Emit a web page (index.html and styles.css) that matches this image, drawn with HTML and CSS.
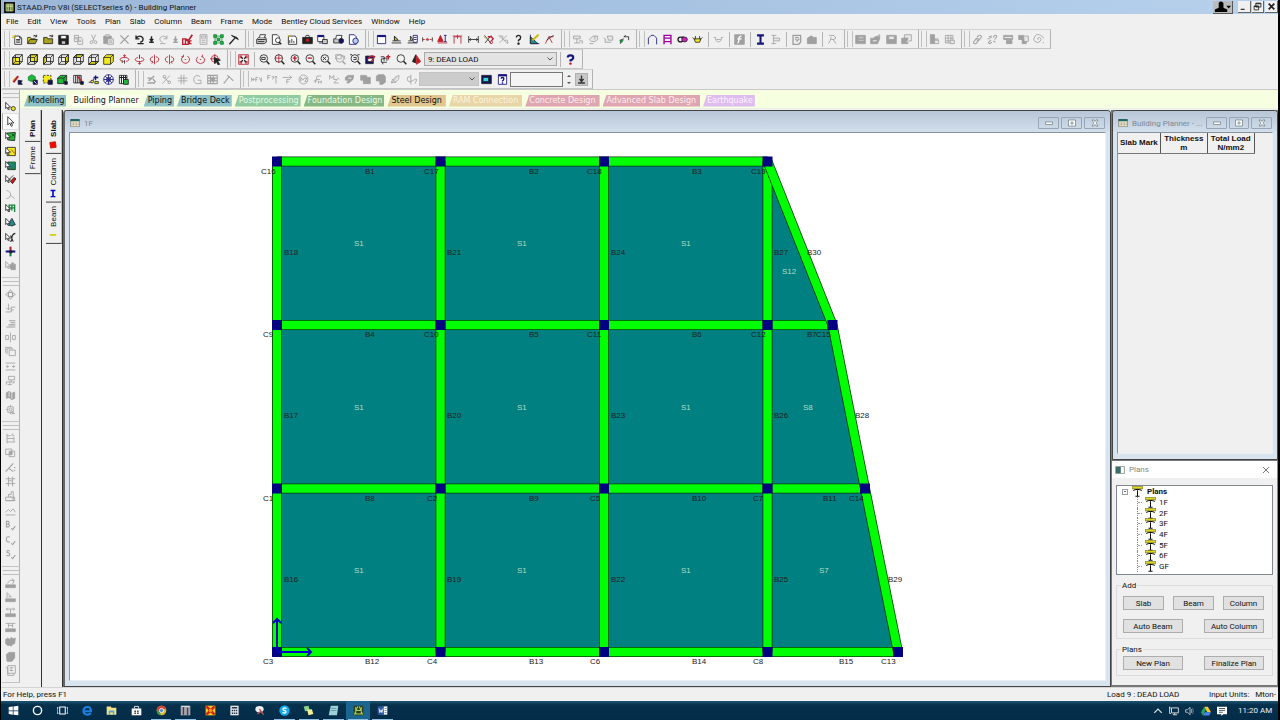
FILE: index.html
```html
<!DOCTYPE html>
<html lang="en">
<head>
    <meta charset="UTF-8">
    <meta name="viewport" content="width=device-width, initial-scale=1.0">
    <title>STAAD.Pro V8i (SELECTseries 6) - Building Planner</title>
    <link rel="stylesheet" href="styles.css">
</head>
<body>
    <header class="titlebar">
        <span class="app-icon" data-icons="staad"></span>
        <h1>STAAD.Pro V8i (SELECTseries 6) - Building Planner</h1>
        <button class="user" aria-label="User">
            <svg viewBox="0 0 20 12"><path d="M2 12V9l4-2V2q2-3 5 0v5l4 2v3z" fill="#000"/><path d="M14 5h5l-2.500 3z" fill="#000"/></svg>
        </button>
        <div class="win-buttons" data-icons="w-min w-restore w-close"></div>
    </header>

    <nav class="menu">
        <button>File</button>
        <button>Edit</button>
        <button>View</button>
        <button>Tools</button>
        <button>Plan</button>
        <button>Slab</button>
        <button>Column</button>
        <button>Beam</button>
        <button>Frame</button>
        <button>Mode</button>
        <button>Bentley Cloud Services</button>
        <button>Window</button>
        <button>Help</button>
    </nav>

    <section class="toolbars">
        <div class="row">
            <div class="bar" id="file-bar" data-icons="new open close save ~copy ~cut ~paste ~delete undo down ~redo ~down check ~calc structure hammer"></div>
            <div class="bar" id="print-bar" data-icons="print preview report camera export print-all page-info"></div>
            <div class="bar" id="tools-bar" data-icons="win load load-list dim-red load-red frame-red dimension cut-red ~cut-grid help chart angle-red"></div>
            <div class="bar" id="view-bar" data-icons="~beam-t ~select-box ~select-win rotate-view"></div>
            <div class="bar" id="model-bar" data-icons="portal ladder ring plug | ~sag | ~function | ibeam ~beam-edit | ~sheet ~shape | ~run"></div>
            <div class="bar" id="layout-bar" data-icons="~disk ~disk-open ~disk2 ~disk-copy"></div>
            <div class="bar" id="page-bar" data-icons="~doc-lock ~grid-lock"></div>
            <div class="bar" id="link-bar" data-icons="~link ~unlink ~blocks ~blocks2 ~spiral"></div>
        </div>
        <div class="row">
            <div class="bar" id="rotate-bar" data-icons="cube-front cube-back cube-right cube-left cube-top cube-bottom cube-iso rot-up rot-down rot-left rot-right rot-ccw rot-cw rot-pick"></div>
            <div class="bar" id="zoom-bar">
                <span class="set" data-icons="whole | zoom-win zoom-all zoom-in zoom-out zoom-factor ~zoom-prev zoom-dyn previous pan magnify half"></span>
                <select aria-label="Load case"><option>9: DEAD LOAD</option></select>
                <span class="set" data-icons="| help-blue"></span>
            </div>
        </div>
        <div class="row">
            <div class="bar" id="geometry-bar" data-icons="add-beam add-plate add-surface add-solid mesh add-node globe grid-green"></div>
            <div class="bar" id="insert-bar" data-icons="~pencil ~scissor-line ~split ~circle-g ~grid ~peak"></div>
            <div class="bar" id="result-bar">
                <span class="set" data-icons="~fx ~fy ~arrow-fz ~circle-m ~fmy ~mz ~shade ~solid ~solid2 ~leaf ~curve"></span>
                <select class="small" aria-label="Mode" disabled><option></option></select>
                <span class="set" data-icons="screen help-page"></span>
                <input type="text" aria-label="Value">
                <span class="spinner">
                    <button aria-label="Up"><svg viewBox="0 0 6 4"><path d="M1 3l2-2 2 2z"/></svg></button>
                    <button aria-label="Down"><svg viewBox="0 0 6 4"><path d="M1 1l2 2 2-2z"/></svg></button>
                </span>
                <button class="apply" aria-label="Apply"><svg viewBox="0 0 16 16"><path d="M3 13h10M8 2v8M5 7l3 4 3-4" stroke="#333" stroke-width="2" fill="none"/></svg></button>
            </div>
        </div>
    </section>

    <main>
        <aside class="side-tools">
            <div class="bar vertical" id="select-bar" data-icons="pick-node pick-beam pick-plate pick-surface pick-solid pick-geom ~pick-text pick-support pick-load pick-curve axes ~pick-hand"></div>
            <div class="bar vertical" id="edit-bar" data-icons="~move ~drop ~align ~mirror ~copies ~spread ~tree-edit ~map ~gear-box"></div>
            <div class="bar vertical" id="draw-bar" data-icons="~levels ~overlap ~angle-x ~hash ~steps ~wave ~b-mark ~c-mark ~s-mark"></div>
            <div class="bar vertical" id="support-bar" data-icons="~sup-pick ~sup-cursor ~sup-fix ~sup-pin ~blob ~blob2 ~frame-box"></div>
        </aside>

        <div class="workspace">
            <nav class="modes">
                <button class="blue">Modeling</button>
                <button class="current">Building Planner</button>
                <button class="blue">Piping</button>
                <button class="blue">Bridge Deck</button>
                <button class="mint">Postprocessing</button>
                <button class="green">Foundation Design</button>
                <button class="tan">Steel Design</button>
                <button class="sand">RAM Connection</button>
                <button class="rose">Concrete Design</button>
                <button class="rose">Advanced Slab Design</button>
                <button class="lilac">Earthquake</button>
            </nav>

            <div class="desktop">
                <nav class="side-tabs views">
                    <button class="current">Plan</button>
                    <button>Frame</button>
                </nav>
                <nav class="side-tabs elements">
                    <button class="current"><svg viewBox="0 0 10 10"><path d="M1 2l7-1 1 7-7 1z" fill="#f00" stroke="#a20"/></svg>Slab</button>
                    <button><svg viewBox="0 0 10 10"><path d="M2 1h6M2 9h6M5 1v8" stroke="#00c" stroke-width="2"/></svg>Column</button>
                    <button><svg viewBox="0 0 10 10"><path d="M1 5h8" stroke="#cc0" stroke-width="2"/></svg>Beam</button>
                </nav>

                <section class="window plan-window">
                    <div class="caption">
                        <svg class="table-icon" viewBox="0 0 16 14"><path d="M.5.5h15v13H.5z" fill="#fff8d8" stroke="#555"/><path d="M0 0h16v4H0z" fill="#266"/><path d="M1 7h14M1 10h14M5 4v9M10 4v9" stroke="#998"/></svg>
                        <h2>1F</h2>
                        <div class="caption-buttons" data-icons="c-min c-max c-close"></div>
                    </div>
                    <div class="client">
                        <svg class="plan" viewBox="70 133 1035 547" role="img" aria-label="Floor plan 1F">
                            <path class="slab" d="M277 161h490l65 164 33 163 33 164H277z"/>
                            <g id="beams"></g>
                            <g id="nodes"></g>
                            <g id="labels"></g>
                            <path class="axis" d="M277 652v-32M273 623l4-4 4 4M277 652h33M307 648l4 4-4 4"/>
                        </svg>
                    </div>
                </section>

                <div class="right">
                    <section class="window table-window">
                        <div class="caption">
                            <svg class="table-icon" viewBox="0 0 16 14"><path d="M.5.5h15v13H.5z" fill="#fff8d8" stroke="#555"/><path d="M0 0h16v4H0z" fill="#266"/><path d="M1 7h14M1 10h14M5 4v9M10 4v9" stroke="#998"/></svg>
                            <h2>Building Planner - ...</h2>
                            <div class="caption-buttons" data-icons="c-min c-max c-close"></div>
                        </div>
                        <div class="client">
                            <table>
                                <tr><th>Slab Mark</th><th>Thickness<br>m</th><th>Total Load<br>N/mm2</th></tr>
                            </table>
                        </div>
                    </section>

                    <section class="plans">
                        <div class="plans-caption">
                            <svg viewBox="0 0 12 10"><path d="M.5.5h11v9H.5z" fill="#fff" stroke="#888"/><path d="M1 1h6v8H1z" fill="#396e6a"/></svg>
                            <h2>Plans</h2>
                            <button aria-label="Close"><svg viewBox="0 0 8 8"><path d="M1 1l6 6M7 1L1 7" stroke="#777"/></svg></button>
                        </div>
                        <div class="tree">
                            <div class="root"><span class="toggle"></span><span data-icons="floor"></span><b>Plans</b></div>
                            <ul>
                                <li><span data-icons="floor"></span>1F</li>
                                <li><span data-icons="floor"></span>2F</li>
                                <li><span data-icons="floor"></span>3F</li>
                                <li><span data-icons="floor"></span>4F</li>
                                <li><span data-icons="floor"></span>5F</li>
                                <li><span data-icons="floor"></span>6F</li>
                                <li><span data-icons="floor"></span>GF</li>
                            </ul>
                        </div>
                        <fieldset class="add">
                            <legend>Add</legend>
                            <div><button>Slab</button><button>Beam</button><button>Column</button></div>
                            <div class="pair"><button>Auto Beam</button><button>Auto Column</button></div>
                        </fieldset>
                        <fieldset>
                            <legend>Plans</legend>
                            <div class="pair"><button>New Plan</button><button>Finalize Plan</button></div>
                        </fieldset>
                    </section>
                </div>
            </div>
        </div>
    </main>

    <footer class="status">
        <span class="hint">For Help, press F1</span>
        <span class="load-case">Load 9 : DEAD LOAD</span>
        <span class="units">Input Units:&nbsp;&nbsp; Mton-</span>
    </footer>

    <div class="taskbar">
        <div class="apps" data-icons="t-start t-cortana t-tasks t-edge t-folder t-store t-chrome t-photo t-red t-calc t-snip t-skype t-notes t-notepad t-staad t-word"></div>
        <div class="tray" data-icons="t-up t-net t-sound t-drive t-msg"></div>
        <time>11:20 AM</time>
    </div>

    <script>
        const cube = (face) => `${face}<path d="M1 5h10v10H1zM1 5l4-4h10v10l-4 4M11 5l4-4M5 1v10h10M5 11l-4 4"/>`;
        const lens = (inner) => `<circle cx="7" cy="6.500" r="5.500"/><path d="M11 10.500L15 15" stroke-width="2"/>${inner}`;
        const cursor = '<path d="M1 2v9l2-2 2 4 1-1-1-3h3z" class="fw"/>';
        const support = '<path d="M1 10h14v4H1z" class="fc"/>';

        const icons = {
            'new': '<path d="M4 3h7l3 3v9H4z" class="fw"/><path d="M6 8h6M6 10h6M6 12h6M11 3v3h3"/><path d="M1 2l4 4M5 1L2 5M0 5h5" class="sy"/>',
            'open': '<path d="M1 14V5h4l1 2h6v2" class="fy"/><path d="M1 14l3-6h11l-3 6z" class="fo"/><path d="M9 3q3-3 5 1M14 1v3h-3"/>',
            'close': '<path d="M1 14V5h5l1 2h7v7z" class="fo"/><path d="M9 3q3-3 5 1M14 1v3h-3"/>',
            'save': '<path d="M1 2h14v13H1z" class="fc"/><path d="M4 2h8v5H4z" class="fw"/><path d="M5 10h6v5H5z" class="fn"/>',
            'copy': '<path d="M2 2h6v9H2zM7 5h5l2 3v7H7zM3 5h3M3 7h3M9 9h3M9 11h3"/>',
            'cut': '<path d="M5 1l4 9M11 1L7 10"/><circle cx="5" cy="12" r="2"/><circle cx="11" cy="12" r="2"/>',
            'paste': '<path d="M1 3h11v11H1z" class="fc"/><path d="M4 1h5v3H4zM7 7h8v8H7z" class="fw"/><path d="M9 10h4M9 12h4"/>',
            'delete': '<path d="M2 2l12 12M14 2L2 14" stroke-width="2"/>',
            'undo': '<path d="M3 2v5h5M3 6q6-6 10 0 1 5-4 6M5 14h9" stroke-width="2"/>',
            'redo': '<path d="M13 2v5H8M13 6q-6-6-10 0-1 5 4 6M3 14h8"/>',
            'down': '<path d="M8 2v8M5 7l3 4 3-4M4 13h8" stroke-width="2.500"/>',
            'check': '<path d="M1 7h4v8H1zM6 9h3v6H6M14 10h-3v4h3" class="sr" stroke-width="2"/><path d="M6 7l3 3 6-9" class="sr" stroke-width="2.500"/>',
            'calc': '<path d="M3 1h10v14H3zM5 3h6v3H5zM5 9h6M5 12h6"/>',
            'structure': '<path d="M3 3l10 10M13 3L3 13M3 3h10v10H3z" class="sg"/><path d="M1 1h4v4H1zM11 1h4v4h-4zM1 11h4v4H1zM11 11h4v4h-4zM6 6h4v4H6z" class="fg sg"/>',
            'hammer': '<path d="M5 2l8 3 2 3-4-2z" class="fc"/><path d="M10 6L2 15" stroke-width="2"/>',
            'print': '<path d="M1 8l3-3h10l1 3v4l-3 2H1z" class="fn"/><path d="M5 5l1-4h8l-2 4M3 11h9M2 8h12" class="fw"/>',
            'preview': '<path d="M2 1h7l3 3v11H2z" class="fw"/><circle cx="10" cy="9" r="3.500" class="fw"/><path d="M12 12l3 3" stroke-width="2"/>',
            'report': '<path d="M2 3h10l2 3v9H2z" class="fw"/><path d="M4 13V9M7 13V7M10 13v-3"/><path d="M1 1l3 3M5 1L2 4" class="sy"/>',
            'camera': '<path d="M1 5h14v9H1z" class="fc"/><path d="M5 5l1-3h4l1 3"/><circle cx="8" cy="9" r="3" class="fr"/>',
            'export': '<path d="M1 2h9v9H1z" class="fw"/><path d="M1 3h9" class="sb" stroke-width="3"/><path d="M8 8h7v6H8z" class="fn"/><path d="M3 13h4" class="sb"/>',
            'print-all': '<path d="M1 7h12v6H1z" class="fn"/><path d="M4 7l1-5h8l-1 5" class="fw"/><circle cx="12" cy="10" r="3.500" class="fb"/>',
            'page-info': '<path d="M2 1h7l3 3v11H2z" class="fw sb"/><circle cx="11" cy="10" r="4" class="fl sb"/>',
            'win': '<path d="M2 2h12v12H2z" class="fw sb"/><path d="M2 3h12" class="sb" stroke-width="3"/>',
            'load': '<path d="M1 13h14M2 10h12M5 10V3l5 5"/><path d="M5 4v5h5z" class="fy"/>',
            'load-list': '<path d="M1 13h14M2 10h5" /><path d="M5 3v6h4z" class="fy"/><path d="M9 2h6v10H9z" class="fw sb"/><path d="M10 5h4M10 8h4" class="sb"/>',
            'dim-red': '<path d="M1 5v6M15 5v6"/><path d="M1 8h14" class="sr" stroke-dasharray="3 2"/><circle cx="8" cy="8" r="1.500" class="sr"/>',
            'load-red': '<path d="M5 2l4 9H1zM1 13h14" class="fr sr"/><path d="M12 2v9M10 2h4M10 11h4" class="sb"/>',
            'frame-red': '<path d="M3 14V4h10v10M1 3h14M8 1v6" class="sr"/>',
            'dimension': '<path d="M1 3v10M15 3v10M1 8h14M4 6L2 8l2 2M12 6l2 2-2 2"/>',
            'cut-red': '<path d="M2 2l10 12M12 2L3 13"/><path d="M7 4h5l3 3-3 3" class="sr" stroke-width="2"/><circle cx="12" cy="12" r="2" class="sr"/><path d="M1 4l4 3" class="sy"/>',
            'cut-grid': '<path d="M1 2l13 12M13 2L2 13M2 3h5v5M9 9h5v5"/>',
            'help': '<path d="M5 5q0-3 3-3t3 3-3 4v2" stroke-width="2"/><path d="M7 13h2v2H7z" class="fc"/>',
            'chart': '<path d="M2 1v13h13" class="sb"/><path d="M2 14V4l11 10z" class="ft"/><path d="M5 9l9-8" class="sy" stroke-width="3"/>',
            'angle-red': '<path d="M2 14L7 4l5 9M7 4h7" class="sr"/><path d="M4 9l5-4 5-3"/>',
            'beam-t': '<path d="M2 3h10v4H2zM7 7v6M3 13h9M10 10h5v4" class="fn"/>',
            'select-box': '<path d="M2 8l5-5h7v5l-4 3H5zM2 14h6M10 3v5" class="fn"/>',
            'select-win': '<path d="M6 3h8v6H8zM3 7v5h9M1 5l3 3" class="fn"/>',
            'rotate-view': '<path d="M7 4h7v5M7 4l3-2M2 14V9l5-2" /><path d="M1 9l4 1-3 3" class="sg" stroke-width="2"/>',
            'portal': '<path d="M2 15V6l4-4h4l4 4v9" class="sb"/>',
            'ladder': '<path d="M3 1v14M13 1v14M3 2h10M3 6h10M3 11h10" class="sm" stroke-width="2"/>',
            'ring': '<circle cx="5" cy="8" r="3.500" stroke-width="2"/><ellipse cx="11" cy="8" rx="4" ry="3.500" class="fm"/><path d="M7 4h3"/>',
            'plug': '<path d="M3 7h10l-2 5H5z" class="fy"/><path d="M5 7V3M11 7V3M1 5l3 3M15 5l-3 3"/>',
            'sag': '<path d="M1 5h3v4q4 5 8 0V5h3M5 8h6"/>',
            'function': '<path d="M1 1h14v14H1z" class="fc"/><path d="M5 13q2 0 2-5t4-5M5 7h6" stroke="#fff" stroke-width="2"/>',
            'ibeam': '<path d="M3 2h10M3 14h10M8 2v12" class="sb" stroke-width="3"/>',
            'beam-edit': '<path d="M2 2h7M2 14h7M5 2v12M5 6h9v4H6" class="fn"/>',
            'sheet': '<path d="M3 2h11v10l-3 3H3zM6 5h5M6 8h2M8 11l4-4" stroke-width="2"/>',
            'shape': '<path d="M2 6l5-3h2l1 2h5v9H2z" class="fc"/>',
            'run': '<path d="M3 2h7l3 4-4 2 4 6M6 4L5 9l-3 5M6 8h4"/>',
            'disk': '<path d="M1 2h14v12H1z" class="fc"/><path d="M5 4h8v2H5zM5 8h8v2H5z" class="fw"/>',
            'disk-open': '<path d="M1 14V6h5l1-2h7v3L11 14z" class="fc"/><path d="M9 4l5-3v4"/><path d="M4 10h6" stroke="#fff"/>',
            'disk2': '<path d="M1 2h14v12H1z" class="fc"/><path d="M4 3h8v5H4z" class="fw"/>',
            'disk-copy': '<path d="M5 1h10v9H5z" class="fn"/><path d="M1 6h9v8H1z" class="fc"/><path d="M8 12l6-6" stroke="#fff"/>',
            'doc-lock': '<path d="M2 1h6v13H2z" class="fc"/><path d="M8 9h6v5H8zM9 9V7h4v2" class="fn"/>',
            'grid-lock': '<path d="M2 2h11v11H2zM2 6h11M2 10h11M6 2v11M10 2v11"/><path d="M9 9h6v5H9z" class="fn"/>',
            'link': '<path d="M7 5l3-3q3-1 4 2l-4 5q-3 1-3-1M9 10l-3 4q-3 1-4-2l4-5q3-1 4 1" stroke-width="1.500"/>',
            'unlink': '<path d="M9 5l2-3q3-1 3 2l-3 4M6 9l-3 2q-2 2 1 3l3-2M3 3l3 3M1 7h3M12 12l-3-2M6 2v3" stroke-width="1.500"/>',
            'blocks': '<path d="M1 2h7v6H1zM9 2h5v6H9zM5 9h8v5H5z" class="fc"/><path d="M2 5h11" stroke="#fff"/>',
            'blocks2': '<path d="M1 2h7v6H1zM6 6h6v8H6z" class="fc"/><path d="M8 3h7v8H9z" class="fw"/>',
            'spiral': '<path d="M8 8q-2 0-1-2 2-2 4 0t-1 5-7 0 0-8 11 1 0 9"/>',
            'cube-front': cube('<path d="M1 5h10v10H1z" class="fy"/>'),
            'cube-back': cube('<path d="M5 1h10v10H5z" class="fy"/>'),
            'cube-right': cube('<path d="M1 5l4-4v10l-4 4z" class="fy"/>'),
            'cube-left': cube('<path d="M11 5l4-4v10l-4 4z" class="fy"/>'),
            'cube-top': cube('<path d="M1 5l4-4h10l-4 4z" class="fy"/>'),
            'cube-bottom': cube('<path d="M1 15l4-4h10l-4 4z" class="fy"/>'),
            'cube-iso': '<path d="M1 5l4-4h10v10l-4 4H1z" class="fy"/><path d="M1 5h10v10M11 5l4-4"/>',
            'rot-up': '<path d="M6 11Q-1 9 3 6q5-3 10 0 4 3-3 5M8 1v5M6 3l2-2 2 2" class="sr"/><path d="M8 9v5M6 11l-2-2M6 11l-2 2"/>',
            'rot-down': '<path d="M6 5Q-1 7 3 10q5 3 10 0 4-3-3-5M8 10v5M6 13l2 2 2-2" class="sr"/><path d="M8 1v6"/>',
            'rot-left': '<path d="M8 1v14M6 4Q1 5 2 9q1 3 4 3M10 4q5 1 4 5-1 3-4 3M4 10l2 2-2 2" class="sr"/>',
            'rot-right': '<path d="M8 1v14M10 4q5 1 4 5-1 3-4 3M6 4Q1 5 2 9q1 3 4 3M12 10l-2 2 2 2" class="sr"/>',
            'rot-ccw': '<path d="M5 3q-5 4-2 8 5 5 10 0 3-4-2-8M5 1v3H2" class="sr"/><path d="M7 8h2" class="sr"/>',
            'rot-cw': '<path d="M4 4q-4 4-1 8 5 4 10 0 3-5-2-8H9M11 1v3" class="sr"/><path d="M7 8h2" class="sr"/>',
            'rot-pick': '<circle cx="7" cy="7" r="5" class="sr"/><path d="M7 0v14M0 7h14" class="sr"/><path d="M6 5l9 4-4 1 3 5-2 1-3-5-2 3z" class="fc"/>',
            'whole': '<path d="M1 1h14v14H1z" class="sr"/><path d="M4 4l3 3M12 4L9 7M4 12l3-3M12 12L9 9" stroke-width="2"/><path d="M3 6V3h3M10 3h3v3M13 10v3h-3M6 13H3v-3" class="sr" stroke-width="1.500"/>',
            'zoom-win': lens('<path d="M4 5h5v3H4z"/>'),
            'zoom-all': lens('<path d="M7 0v13M1 6h12" class="sr"/>'),
            'zoom-in': lens('<path d="M4 6h6M7 3v7" class="sr" stroke-width="2"/>'),
            'zoom-out': lens('<path d="M4 6h6" class="sr" stroke-width="2"/>'),
            'zoom-factor': lens('<path d="M4 4l5 5M9 4L4 9"/>'),
            'zoom-prev': lens('<path d="M1 1h8v6H1zM10 3h4v5"/>'),
            'zoom-dyn': lens('<path d="M5 5h4v3H5M0 1h3M11 1h3"/>'),
            'previous': '<path d="M1 3h11v11H1z" class="fb"/><path d="M4 6h8v5H4z" class="fw"/><path d="M4 7q5-6 10-3l-5 7" class="sr" stroke-width="2"/>',
            'pan': '<path d="M1 4h5v3H2v5h8M4 12v3M6 10V6h4v4"/><path d="M12 1v7M9 4h6" class="sr" stroke-width="2"/>',
            'magnify': lens(''),
            'half': '<path d="M7 1v12l-5-2z" class="fc"/><path d="M8 2l6 9-6 4z" class="fr sr"/>',
            'help-blue': '<path d="M4 5q0-3 4-3t4 3-4 4v2" class="sb" stroke-width="3"/><path d="M7 13h2v2H7z" class="fr sr"/>',
            'add-beam': '<path d="M2 12L9 3" class="sr" stroke-width="3"/><path d="M1 10l4-5" class="sy"/><path d="M9 9l6 1-2 2 2 3H9z" class="fb"/>',
            'add-plate': '<path d="M2 4l5-3 5 3v6l-5 1-5-2z" class="fg sg"/><path d="M9 9h6v6H9z" class="fb"/><path d="M10 10l4 4" stroke="#fff"/>',
            'add-surface': '<path d="M2 2h11v11H2z" class="fy" stroke-dasharray="3 2"/><path d="M9 9h6v6H9z" class="fb"/>',
            'add-solid': '<path d="M1 6l4-4h9v7l-4 5H1z" class="fg"/><path d="M1 6h9v8M10 6l4-4"/><path d="M11 11h4v4h-4z" class="fb"/>',
            'mesh': '<path d="M1 2h11v11H1z" class="fw"/><path d="M4 2v11M7 2v11M10 2v11" stroke-width="1.500"/><path d="M6 3l7 8" class="sr" stroke-width="2"/><path d="M11 11h4v4h-4z" class="fb"/>',
            'add-node': '<path d="M1 12h5l3-6" class="sb"/><circle cx="6" cy="11" r="2" class="fy"/><path d="M11 2v7M8 5h7" class="sb" stroke-width="2"/><path d="M10 11h5v3h-5z" class="fy"/>',
            'globe': '<circle cx="8" cy="8" r="7" class="sb"/><circle cx="8" cy="8" r="3" class="sb"/><path d="M8 1v14M1 8h14M3 3l10 10M13 3L3 13" class="sb"/>',
            'grid-green': '<path d="M2 2h11v12H2z" class="fw"/><path d="M2 5h11M5 2v12M8 2v12M11 2v12" stroke-width="1.500"/><path d="M8 8h7v7H8z" class="fg"/>',
            'pencil': '<path d="M2 13h11M4 10l8-7M2 6h6M10 7l4 5" stroke-width="2"/>',
            'scissor-line': '<path d="M2 14L13 2M3 4l9 8"/><circle cx="5" cy="4" r="2"/><circle cx="12" cy="12" r="2"/>',
            'split': '<path d="M6 1v14M10 1v14M1 6h14M1 10h14"/>',
            'circle-g': '<path d="M12 4q-5-4-9 1-2 6 3 9h7V9H8"/>',
            'grid': '<path d="M1 2h14v12H1zM1 6h14M1 10h14M5 2v12M9 2v12" stroke-width="1.500"/><path d="M6 6h5v4H6z" class="fc"/>',
            'peak': '<path d="M1 14L9 4l6 6M6 2l3 2" stroke-width="1.500"/>',
            'fx': '<path d="M1 5v6M1 8h4M3 6l2 2-2 2M7 11V5h3M7 8h2M12 5l3 6M15 5v6"/>',
            'fy': '<path d="M1 8V2h4M1 5h3M7 4h3l-2 4M13 14V3M11 5l2-2 2 2"/>',
            'arrow-fz': '<path d="M1 5h13M11 2l3 3-3 3M7 14V8h4M7 11h3"/>',
            'circle-m': '<circle cx="8" cy="8" r="6.500"/><path d="M4 11V5l3 4 3-4M10 6h3l-3 5h3"/>',
            'fmy': '<path d="M3 13L6 3h6M5 8h5M8 14v-4l2 2 2-2v4M1 10h5"/>',
            'mz': '<path d="M1 8V2l3 4 3-4v6M7 8h5l-5 5h7M12 5l3 3"/>',
            'shade': '<path d="M2 5l4-3h8l-1 6-6 5H4l3-4H2z" class="fc"/><path d="M6 6h5" stroke="#fff"/>',
            'solid': '<path d="M1 2h8l2 3h4v9H5V9H1z" class="fc"/>',
            'solid2': '<path d="M2 3l3-2h8l2 3v8l-4 3H7v-5H2z" class="fc"/>',
            'leaf': '<path d="M2 13Q3 6 13 2q1 7-6 10l-5 1 8-8M3 7l6 6"/>',
            'curve': '<path d="M7 1v14M7 5Q1 2 2 8t9 1 2 5"/>',
            'screen': '<path d="M1 2h14v12H1z" class="fb"/><path d="M3 5h8v6H3z" class="fa"/>',
            'help-page': '<path d="M2 1h12v14H2z" class="fw sb"/><path d="M2 2h12" class="sb" stroke-width="3"/><path d="M6 7q0-2 2-2t2 2-2 3v1M8 12v2" class="sb" stroke-width="2"/>',
            'pick-node': cursor + '<circle cx="12" cy="11" r="3" class="fy"/>',
            'pick-beam': '<path d="M4 1v12l3-3 2 5 2-1-2-4h4z" class="fw"/>',
            'pick-plate': '<path d="M3 3l12-1-1 12-10-1z" class="fg"/>' + cursor + '<path d="M10 4l4 4M14 4l-4 4"/>',
            'pick-surface': '<path d="M3 2h12v12H3z" class="fy"/>' + cursor + '<path d="M9 5l5 6" class="sr"/>',
            'pick-solid': '<path d="M4 3h11v11H4z" class="ft"/>' + cursor + '<path d="M7 4h7l-5 8h6" class="sg" stroke-width="2"/>',
            'pick-geom': cursor + '<path d="M8 11l5-6 3 2-5 7z" class="fr"/><path d="M5 9l7-7"/>',
            'pick-text': '<path d="M2 2q7 2 6 7t-6 5M8 9l6 5"/>',
            'pick-support': '<path d="M5 3h10M6 3v10M10 4v7M14 3v10M5 7h9" class="sg" stroke-width="2"/>' + cursor,
            'pick-load': '<path d="M4 11l6-9 5 9q-5 4-11 0z" class="ft"/>' + cursor,
            'pick-curve': cursor + '<path d="M7 13q3 2 3-4t5-7M8 5l4 9" stroke-width="1.500"/>',
            'axes': '<path d="M8 1v7" class="sr" stroke-width="3"/><path d="M8 8v7" class="sg" stroke-width="3"/><path d="M1 8h14" class="sb" stroke-width="3"/><path d="M7 7h3v3H7z" class="fc"/>',
            'pick-hand': cursor + '<path d="M8 6h2V4h2v2h3v8H9l-2-4z" class="fc"/>',
            'move': '<path d="M8 1l3 4H5zM8 15l3-4H5zM1 8l4-3v6zM15 8l-4-3v6zM5 5h6v6H5z"/>',
            'drop': '<path d="M5 1v9M2 7l3 3 3-3M1 13h8V6h6M9 10h4"/>',
            'align': '<path d="M2 13h13M6 4h9M8 7h7M5 10h10" stroke-width="1.500"/>',
            'mirror': '<path d="M8 1v14M1 5h4v6H1zM11 5h4v6h-4z"/>',
            'copies': '<path d="M1 10V2h9M3 12V4h9M6 6h9v8H6z"/>',
            'spread': '<path d="M1 3h14M1 13h14M2 8h4M4 6L2 8l2 2M14 8h-4M12 6l2 2-2 2"/>',
            'tree-edit': '<path d="M5 2h9v5H5zM9 7v3M2 10h12M2 10v4M7 10v4M11 13l3-3M4 14h6"/>',
            'map': '<path d="M2 4l4-2 4 3 4-2v9l-4 2-4-3-4 1z" class="fc"/><path d="M6 3v7M10 5v8" stroke="#eee"/>',
            'gear-box': '<path d="M4 4h8v8H4zM8 1v3M1 8h3M8 12v3M10 11l4 3h-4z"/><circle cx="8" cy="8" r="2"/>',
            'levels': '<path d="M3 1v14M3 4h5M3 8h10M3 13h12M9 3l3-2M10 4h4M13 6v6"/>',
            'overlap': '<path d="M1 3h9v8H1zM6 6h8v8H6z"/><path d="M7 7h3v4H7z" class="fc"/>',
            'angle-x': '<path d="M1 14L12 2M5 9l7 5M13 8h2M13 12h2" stroke-width="1.500"/>',
            'hash': '<path d="M5 1v14M11 1v14M1 4h14M1 11h14M5 7h6"/>',
            'steps': '<path d="M1 14V9h4V5h4V1h3v13zM5 9h9v5M1 14h14M7 7l4 4"/>',
            'wave': '<path d="M1 13h14M1 9l4-4 3 3 4-4 3 5"/>',
            'b-mark': '<path d="M2 2v8h3q3-2 0-4 2-3 0-4zM2 6h3M9 12l2 2 4-5" stroke-width="1.500"/>',
            'c-mark': '<path d="M7 3Q2 1 2 6t5 4M9 12l2 2 4-5" stroke-width="1.500"/>',
            's-mark': '<path d="M7 3Q2 1 3 5q4 0 4 3T2 9M9 12l2 2 4-5" stroke-width="1.500"/>',
            'sup-pick': support + '<path d="M3 8l5-5 5 1-2 5M10 1l4 3"/>',
            'sup-cursor': support + '<path d="M3 1v8M3 1l6 6H5"/>',
            'sup-fix': support + '<path d="M2 3h12M8 3v7M4 1L2 3l2 2M12 1l2 2-2 2"/>',
            'sup-pin': support + '<path d="M1 2h14M5 2v6M11 2v6M5 5h6"/>',
            'blob': '<path d="M1 5l3-2 3 2 2-3 3 2 3-1-1 8-3 1-2 3-2-2-3 1-3-3z" class="fc"/>',
            'blob2': '<path d="M2 5l4-3h8v8l-4 5H3z" class="fc"/>',
            'frame-box': '<path d="M4 1h11v11H4zM1 4h3v11h9v-3M7 4h5M7 8h5M9 4v5"/>',
            'floor': '<path d="M0 1h16v3H0z" class="fy sd"/><path d="M2 7q1-2 4-2h4q3 0 4 2M8 6v9M5 15h6" stroke-width="1.500"/>',
            'w-min': '<path d="M3 13h7" stroke-width="2"/>',
            'w-restore': '<path d="M5 2h9v7H5zM2 7h8v7H2z" class="fz" stroke-width="1.500"/><path d="M5 3h9M2 8h8" stroke-width="2"/>',
            'w-close': '<path d="M3 3l10 10M13 3L3 13" stroke-width="3"/>',
            'c-min': '<path d="M1 6h14v5H1z" class="fw"/>',
            'c-max': '<path d="M1 2h14v12H1zM6 6h4v4H6z" class="fw"/>',
            'c-close': '<path d="M2 2h4l2 3 2-3h4l-4 6 4 6h-4l-2-3-2 3H2l4-6z" class="fw"/>',
            'staad': '<path d="M0 0h16v16H0z" class="fc"/><path d="M3 3h10v10H3z" fill="#47752f" stroke="#c9d88a"/><path d="M6 3v10M10 3v10M3 6h10" stroke="#eef3b0"/>',
            't-start': '<path d="M1 3l6-1v6H1zM8 2l7-1v7H8zM1 9h6v5l-6-1zM8 9h7v6l-7-1z" fill="#fff" stroke="none"/>',
            't-cortana': '<circle cx="8" cy="8" r="6" stroke="#fff" stroke-width="2"/>',
            't-tasks': '<path d="M4 3h8v10H4zM2 4H0v8h2M14 4h2v8h-2" stroke="#fff" stroke-width="1.500"/>',
            't-edge': '<path d="M2 9h11Q13 3 8 3 3 3 2 8q0 6 6 6 3 0 5-2" stroke="#1d7fe0" stroke-width="3"/>',
            't-folder': '<path d="M1 2h6l1 2h7v10H1z" fill="#f5e38a" stroke="none"/><path d="M4 8h8v6h-2v-3H6v3H4z" fill="#4aa9d8" stroke="none"/>',
            't-store': '<path d="M1 5h14v10H1z" fill="#fff" stroke="none"/><path d="M5 5V2h6v3" stroke="#fff"/><path d="M5 8h2v2H5zM9 8h2v2H9zM5 11h2v2H5zM9 11h2v2H9z" fill="#123" stroke="none"/>',
            't-chrome': '<circle cx="8" cy="8" r="7" fill="#e2b92e" stroke="none"/><path d="M1 6q2-5 7-5t7 5H8L5 10z" fill="#d9432f" stroke="none"/><path d="M1 6l5 5 1 4Q0 13 1 6z" fill="#3a9a4b" stroke="none"/><circle cx="8" cy="8" r="3" fill="#4a86d8" stroke="#fff"/>',
            't-photo': '<path d="M1 1h14v14H1z" fill="#a3a9b0" stroke="none"/><path d="M5 3v11M11 4v11" stroke="#634" stroke-width="2"/><path d="M2 2h12" stroke="#eee"/>',
            't-red': '<path d="M1 1h14v14H1z" fill="#f5d020" stroke="none"/><path d="M2 2l12 12M14 2L2 14" stroke="#d32810" stroke-width="4"/><path d="M6 6h4v4H6z" fill="#f5a020" stroke="none"/>',
            't-calc': '<path d="M2 1h12v14H2z" fill="#e8eaec" stroke="none"/><path d="M4 4h8M4 8h2M7 8h2M10 8h2M4 12h2M7 12h2M10 12h2" stroke="#234" stroke-width="2"/>',
            't-snip': '<ellipse cx="8" cy="6" rx="6" ry="4.500" fill="#eee" stroke="none"/><path d="M8 6l6 8M10 9l-5 4" stroke="#b55" stroke-width="2"/>',
            't-skype': '<circle cx="8" cy="8" r="7.500" fill="#10a8ea" stroke="none"/><path d="M11 5Q5 3 6 7l4 2q1 4-5 2" stroke="#fff" stroke-width="2"/>',
            't-notes': '<path d="M1 2l7-1 2 7-7 1z" fill="#8cd28c" stroke="none"/><path d="M6 7l7-1 2 7-7 2z" fill="#f4ef92" stroke="none"/>',
            't-notepad': '<path d="M4 1h11l-2 14H1z" fill="#9fd0d8" stroke="none"/><path d="M4 5h8M4 8h8" stroke="#5d98a5"/>',
            't-staad': '<path d="M1 1h14v14H1z" fill="#2c3f1c" stroke="none"/><path d="M4 3v10h8V3M4 8h8M2 14L7 2M14 14L9 2" stroke="#a9cf5c" stroke-width="1.500"/>',
            't-word': '<path d="M8 2h7v12H8z" fill="#fff" stroke="none"/><path d="M1 2l9-1v14l-9-1z" fill="#2b579a" stroke="none"/><path d="M3 5l1 6 2-4 1 4 2-6" stroke="#fff"/><path d="M11 5h3M11 8h3M11 11h3" stroke="#5f80b0"/>',
            't-up': '<path d="M2 11l6-6 6 6" stroke="#ddd" stroke-width="2"/>',
            't-net': '<path d="M4 3h11v8H4zM9 11v3M6 14h7M1 1v11h2M0 3h3" stroke="#ddd" stroke-width="1.500"/>',
            't-sound': '<path d="M1 6h3l4-4v12l-4-4H1zM10 5q2 3 0 6" stroke="#ddd"/><path d="M12 3q3 5 0 10" stroke="#789"/>',
            't-drive': '<path d="M5 1h6l5 9h-6z" fill="#f6c834" stroke="none"/><path d="M5 1L0 10l3 5 5-9z" fill="#1fa463" stroke="none"/><path d="M3 15l3-5h10l-3 5z" fill="#4a86e8" stroke="none"/>',
            't-msg': '<path d="M0 1h16v12h-6l-3 3v-3H0z" fill="#fff" stroke="none"/><path d="M3 4h10M3 7h10M3 10h6" stroke="#123"/>'
        };

        // "|" is a separator, "~" marks a disabled button
        document.querySelectorAll('[data-icons]').forEach(holder => {
            const single = holder.tagName === 'SPAN' && !holder.classList.contains('set');
            holder.innerHTML = holder.dataset.icons.split(' ').map(item => {
                if (item === '|') return '<i class="sep"></i>';
                const name = item.replace('~', '');
                const svg = `<svg class="icon" viewBox="0 0 16 16">${icons[name]}</svg>`;
                if (single) return svg;
                return `<button class="tool ${name}" aria-label="${name}"${item[0] === '~' ? ' disabled' : ''}>${svg}</button>`;
            }).join('');
        });

        // floor plan grid
        const xs = [277, 440.5, 604, 767.5];
        const ys = [161.5, 325, 488.5, 652];
        const edge = [767.5, 832.5, 865, 898];
        const beams = [];
        ys.forEach((y, row) => beams.push([xs[0], y, edge[row], y]));
        xs.forEach(x => beams.push([x, ys[0], x, ys[3]]));
        for (let i = 0; i < 3; i++) beams.push([edge[i], ys[i], edge[i + 1], ys[i + 1]]);
        document.getElementById('beams').innerHTML = beams.map(([x1, y1, x2, y2]) =>
            `<path class="beam-edge" d="M${x1} ${y1}L${x2} ${y2}"/><path class="beam" d="M${x1} ${y1}L${x2} ${y2}"/>`).join('');

        let nodes = '';
        ys.forEach((y, row) => {
            const cols = row ? xs.concat(edge[row]) : xs;
            cols.forEach(x => nodes += `<rect x="${x - 5}" y="${y - 5}" width="10" height="10"/>`);
        });
        document.getElementById('nodes').innerHTML = nodes;

        const labels = [
            [174, 'C16', 261, 'B1', 365, 'C17', 424, 'B2', 529, 'C18', 587, 'B3', 692, 'C19', 751],
            [337, 'C9', 263, 'B4', 365, 'C10', 424, 'B5', 529, 'C11', 587, 'B6', 692, 'C12', 751, 'B7', 807, 'C15', 816],
            [501, 'C1', 263, 'B8', 365, 'C2', 427, 'B9', 529, 'C5', 590, 'B10', 692, 'C7', 753, 'B11', 823, 'C14', 849],
            [664, 'C3', 263, 'B12', 365, 'C4', 427, 'B13', 529, 'C6', 590, 'B14', 692, 'C8', 753, 'B15', 839, 'C13', 881],
            [255, 'B18', 284, 'B21', 447, 'B24', 611, 'B27', 774, 'B30', 807],
            [418, 'B17', 284, 'B20', 447, 'B23', 611, 'B26', 774, 'B28', 855],
            [582, 'B16', 284, 'B19', 447, 'B22', 611, 'B25', 774, 'B29', 888],
            [246, 'S1', 354, 'S1', 517, 'S1', 681],
            [274, 'S12', 782],
            [410, 'S1', 354, 'S1', 517, 'S1', 681, 'S8', 803],
            [573, 'S1', 354, 'S1', 517, 'S1', 681, 'S7', 819]
        ];
        let text = '';
        labels.forEach(([y, ...items]) => {
            for (let i = 0; i < items.length; i += 2) {
                const cls = items[i][0] === 'S' ? ' class="slab-name"' : '';
                text += `<text x="${items[i + 1]}" y="${y}"${cls}>${items[i]}</text>`;
            }
        });
        document.getElementById('labels').innerHTML = text;
    </script>
</body>
</html>
```
FILE: styles.css
```css
* {
    box-sizing: border-box;
}
body {
    margin: 0;
    height: 100vh;
    display: flex;
    flex-direction: column;
    overflow: hidden;
    border-left: 1px solid #000;
    border-right: 2px solid #000;
    background: #f0f0f0;
    color: #111;
    font-family: Roboto, "Open Sans", sans-serif;
    font-size: 8px;
}
button, select, input {
    font: inherit;
    color: inherit;
    padding: 0;
    margin: 0;
    border: none;
    background: none;
    border-radius: 0;
}
h1, h2 {
    margin: 0;
    font-size: 8px;
    font-weight: normal;
    white-space: nowrap;
}
svg {
    display: block;
    flex: none;
}

/* icons */
.icon {
    width: 11px;
    height: 11px;
    fill: none;
    stroke: currentColor;
    stroke-width: 1.2;
}
.icon .fc { fill: currentColor; }
.icon .fy { fill: #f2ea1c; }
.icon .fo { fill: #a9a220; }
.icon .fg { fill: #20b838; }
.icon .fr { fill: #d01818; }
.icon .fb { fill: #10106a; }
.icon .fl { fill: #b8d0f0; }
.icon .fm { fill: #d020c0; }
.icon .ft { fill: #208c94; }
.icon .fa { fill: #30d8e0; }
.icon .fw { fill: #fff; }
.icon .fn { fill: #c8c8c8; }
.icon .fz { fill: #f0f0f0; }
.icon .sr { stroke: #b82030; }
.icon .sb { stroke: #15157c; }
.icon .sg { stroke: #14853c; }
.icon .sy { stroke: #c8bc10; }
.icon .sm { stroke: #a000a0; }
.icon .sd { stroke: #77741a; }
.tool {
    flex: 1;
    min-width: 0;
    display: flex;
    align-items: center;
    justify-content: center;
    color: #222;
}
.tool:disabled {
    color: #a0a0a0;
}
.tool:disabled .fc {
    fill: #a0a0a0;
}
.tool:disabled .fy, .tool:disabled .fn, .tool:disabled .fw {
    fill: #e6e6e6;
}

/* title bar and menu */
.titlebar {
    flex: none;
    height: 14px;
    display: flex;
    align-items: center;
    background: linear-gradient(90deg, #9cb7d8, #a6c2e2 50%, #b7d1ec);
}
.app-icon {
    margin: 0 2px 0 3px;
}
.titlebar h1 {
    flex: 1;
}
.user {
    width: 20px;
    height: 13px;
    background: #bbb;
    border-right: 1px solid #555;
    border-bottom: 1px solid #555;
    margin-right: 5px;
}
.win-buttons {
    display: flex;
    width: 40px;
    gap: 1px;
    height: 12px;
}
.win-buttons .tool {
    background: #f0f0f0;
    border-right: 1px solid #666;
    border-bottom: 1px solid #666;
}
.win-buttons .icon {
    width: 9px;
    height: 9px;
}
.menu {
    flex: none;
    height: 15px;
    display: flex;
    align-items: center;
    gap: 9px;
    padding-left: 5px;
}

/* toolbars */
.toolbars {
    flex: none;
    padding-bottom: 1px;
    border-bottom: 1px solid #c8c8c8;
    height: 61px;
}
.row {
    display: flex;
    height: 20px;
    padding-left: 1px;
}
.bar {
    display: flex;
    align-items: center;
    flex: none;
    height: 20px;
    padding-right: 4px;
    border-top: 1px solid #d2d2d2;
    border-right: 1px solid #b4b4b4;
    border-bottom: 1px solid #c4c4c4;
}
.bar::before {
    content: "";
    flex: none;
    width: 4px;
    height: 16px;
    margin-left: 2px;
    border-left: 1px solid #c0c0c0;
    border-right: 1px solid #c0c0c0;
}
.bar .down {
    flex: 0.6;
}
.bar .down .icon {
    width: 9px;
    height: 9px;
}
.set {
    display: contents;
}
.sep {
    flex: none;
    width: 1px;
    height: 15px;
    margin: 0 2px 0 3px;
    background: #b4b4b4;
}
#file-bar { width: 244px; }
#print-bar { width: 120px; }
#tools-bar { width: 196px; }
#view-bar { width: 75px; }
#model-bar { width: 208px; }
#layout-bar { width: 74px; }
#page-bar { width: 43px; }
#link-bar { width: 89px; }
#rotate-bar { width: 226px; }
#zoom-bar { width: 355px; }
#geometry-bar { width: 134px; }
#insert-bar { width: 105px; }
#result-bar { width: 352px; }
.bar select {
    flex: none;
    width: 133px;
    height: 14px;
    padding-left: 3px;
    border: 1px solid #a8a8a8;
    background: #e3e3e3 url("data:image/svg+xml,%3Csvg xmlns='http://www.w3.org/2000/svg' width='6' height='4'%3E%3Cpath d='M0.5 0.5l2.5 2.5 2.500-2.500' fill='none' stroke='%23555'/%3E%3C/svg%3E") no-repeat right 3px center;
    appearance: none;
}
.bar select.small {
    width: 60px;
    border-color: #c4c4c4;
    background-color: #ccc;
    opacity: 1;
}
.bar input {
    flex: none;
    width: 53px;
    height: 15px;
    border: 1px solid #777;
    background: #f4f4f4;
}
.spinner {
    flex: none;
    display: flex;
    flex-direction: column;
    width: 12px;
}
.spinner button {
    display: flex;
    align-items: center;
    justify-content: center;
    height: 7px;
}
.spinner svg {
    width: 6px;
    height: 4px;
    fill: #555;
}
.apply {
    flex: none;
    width: 13px;
    height: 13px;
    background: #c8c8c8;
    border: 1px solid #b0b0b0;
}

/* left icon column */
main {
    flex: 1;
    min-height: 0;
    display: flex;
}
.side-tools {
    flex: none;
    width: 19px;
    padding-left: 1px;
}
.vertical {
    flex-direction: column;
    width: 18px;
    padding: 0 0 4px;
    border-top: none;
}
.vertical::before {
    width: 16px;
    height: 3px;
    margin: 3px 0 1px;
    border: solid #c0c0c0;
    border-width: 1px 0;
}
.vertical .tool {
    width: 100%;
    min-height: 0;
}
#select-bar { height: 188px; }
#select-bar .pick-beam {
    background: #fafafa;
    border: 1px solid #ddd;
    border-left-color: #aaa;
}
#edit-bar { height: 144px; }
#draw-bar { height: 145px; }
#support-bar { height: 116px; }

/* mode tabs */
.workspace {
    flex: 1;
    min-width: 0;
    display: flex;
    flex-direction: column;
}
.modes {
    flex: none;
    height: 20px;
    display: flex;
    align-items: center;
    gap: 3px;
    padding: 3px 0 0 4px;
    background: #f6ffdf;
    border-bottom: 2px solid #eef0ea;
    font-family: "DejaVu Sans", sans-serif;
    font-size: 8px;
}
.modes button {
    height: 12px;
    line-height: 12px;
    padding: 0 2px 0 4px;
    clip-path: polygon(4px 0, 100% 0, 100% 100%, 0 100%);
    white-space: nowrap;
}
.modes .blue { background: #8fc2c8; }
.modes .current { background: #fafff0; }
.modes .mint { background: #8fcaa0; color: #e4fbe4; }
.modes .green { background: #86b886; color: #eefae4; }
.modes .tan { background: #e2c68f; }
.modes .sand { background: #e8d6a8; color: #fbf3dc; }
.modes .rose { background: #dfa5b2; color: #fdeef0; }
.modes .lilac { background: #dfbcf0; color: #fdf2ff; }
.modes .tan, .modes .sand, .modes .rose {
    padding-right: 4px;
}

/* vertical tabs */
.desktop {
    flex: 1;
    min-height: 0;
    display: flex;
}
.side-tabs {
    flex: none;
    display: flex;
    flex-direction: column;
    align-items: flex-end;
    border-right: 1px solid #333;
    font-family: "Liberation Sans", sans-serif;
    font-size: 8px;
}
.side-tabs button {
    writing-mode: vertical-rl;
    transform: rotate(180deg);
    display: flex;
    align-items: center;
    gap: 4px;
    padding: 4px 3px;
    border-top: 1px solid #444;
    border-left: 1px solid #bbb;
    line-height: 9px;
}
.side-tabs .current {
    padding-bottom: 10px;
    font-weight: bold;
}
.side-tabs svg {
    width: 8px;
    height: 8px;
}
.views {
    width: 22px;
}
.elements {
    width: 21px;
}

/* child windows */
.window {
    display: flex;
    flex-direction: column;
    padding: 0 4px 5px;
    border: 1px solid #444;
    border-radius: 4px 4px 0 0;
    background: #d7e3ef;
}
.plan-window {
    flex: 1;
    min-width: 0;
    border-left: 2px solid #666;
}
.caption {
    flex: none;
    height: 21px;
    display: flex;
    align-items: center;
    gap: 4px;
    margin: 0 -4px;
    padding: 3px 5px 0;
    background: linear-gradient(#b7c6d8, #d2deeb);
    border-radius: 3px 3px 0 0;
}
.caption h2 {
    flex: 1;
    color: #7c8794;
}
.table-icon {
    width: 10px;
    height: 8px;
}
.caption-buttons {
    display: flex;
    gap: 2px;
    width: 67px;
    height: 12px;
}
.caption-buttons .tool {
    border: 1px solid #97a5b6;
    border-radius: 1px;
    color: #566;
}
.caption-buttons .icon {
    width: 8px;
    height: 8px;
}
.client {
    flex: 1;
    min-height: 0;
    border: 1px solid #8a939c;
    border-right-color: #e8eef4;
    border-bottom-color: #e8eef4;
    background: #fff;
}
.plan {
    width: 100%;
    height: 100%;
}
.slab { fill: #008080; }
.beam-edge, .beam {
    fill: none;
    stroke: #063c06;
    stroke-width: 10;
}
.beam {
    stroke: #0f0;
    stroke-width: 8.4;
}
#nodes { fill: #000080; }
.axis {
    fill: none;
    stroke: #0000c8;
    stroke-width: 2;
}
.plan text {
    font-family: "Liberation Sans", sans-serif;
    font-size: 8px;
    fill: #222;
}
.plan .slab-name {
    fill: #b4dcc0;
}

/* right column */
.right {
    flex: none;
    width: 167px;
    display: flex;
    flex-direction: column;
    gap: 1px;
    padding: 0 0 2px 1px;
    background: #777;
}
.table-window {
    flex: 1;
    min-height: 0;
}
.table-window .client {
    background: #f0f0f0;
}
table {
    border-collapse: collapse;
    font-family: "Liberation Sans", sans-serif;
    font-size: 8px;
    line-height: 9px;
}
th {
    height: 20px;
    padding: 0 2px;
    border-right: 1px solid #555;
    border-bottom: 1px solid #777;
    white-space: nowrap;
}
th + th {
    min-width: 47px;
}
.plans {
    flex: none;
    background: #f0f0f0;
    padding-bottom: 9px;
    border-right: 1px solid #888;
}
.plans-caption {
    display: flex;
    align-items: center;
    gap: 4px;
    height: 17px;
    padding: 0 7px 0 3px;
    background: #fff;
}
.plans-caption > svg {
    width: 10px;
    height: 8px;
}
.plans-caption button svg {
    width: 8px;
    height: 8px;
}
.plans-caption h2 {
    flex: 1;
    color: #888;
}
.tree {
    margin: 7px 4px 0;
    height: 90px;
    border: 1px solid #828790;
    background: #fff;
}
.root {
    display: flex;
    align-items: center;
    height: 11px;
    padding-left: 5px;
}
.root b {
    margin-left: 4px;
}
.root .icon {
    margin-left: 4px;
}
.toggle {
    width: 6px;
    height: 6px;
    border: 1px solid #99a;
    background: linear-gradient(#669, #669) center / 2px 1px no-repeat #fff;
}
.tree ul {
    list-style: none;
    margin: 0 0 0 20px;
    padding: 0;
    height: 75px;
    display: flex;
    flex-direction: column;
}
.tree li {
    flex: 1;
    min-height: 0;
    display: flex;
    align-items: center;
    gap: 3px;
    border-left: 1px dotted #888;
}
.tree li::before {
    content: "";
    width: 4px;
    border-top: 1px dotted #999;
}
fieldset {
    margin: 6px 4px 0;
    padding: 2px 8px 5px 6px;
    border: 1px solid #dcdcdc;
}
legend {
    padding: 0 1px;
    margin-left: -2px;
    line-height: 9px;
}
fieldset div {
    display: flex;
    justify-content: space-between;
}
.add .pair {
    margin-top: 9px;
}
fieldset button {
    width: 41px;
    height: 14px;
    border: 1px solid #adadad;
    background: #e1e1e1;
}
.pair button {
    width: 60px;
}
.add {
    padding-top: 6px;
}

/* status bar and taskbar */
.status {
    flex: none;
    height: 14px;
    display: flex;
    align-items: center;
    padding-left: 2px;
    border-top: 1px solid #d4d4d4;
    white-space: nowrap;
}
.hint {
    flex: 1;
}
.load-case {
    width: 102px;
}
.units {
    width: 69px;
}
.taskbar {
    flex: none;
    height: 19px;
    display: flex;
    align-items: center;
    background: linear-gradient(#1d5672, #06304c 20%, #032c48);
    color: #eee;
}
.apps {
    display: flex;
    width: 394px;
    height: 19px;
    margin-right: auto;
}
.apps .tool {
    border-bottom: 1px solid transparent;
}
.apps .t-chrome, .apps .t-photo, .apps .t-skype, .apps .t-notes,
.apps .t-notepad, .apps .t-staad, .apps .t-word {
    border-image: linear-gradient(90deg, transparent 10%, #8fc0e4 10%, #8fc0e4 90%, transparent 90%) 1;
}
.apps .t-staad {
    background: #1b6591;
}
.tray {
    display: flex;
    width: 80px;
    margin-right: 8px;
}
.tray .icon {
    width: 10px;
    height: 10px;
}
.taskbar time {
    width: 40px;
}
```
